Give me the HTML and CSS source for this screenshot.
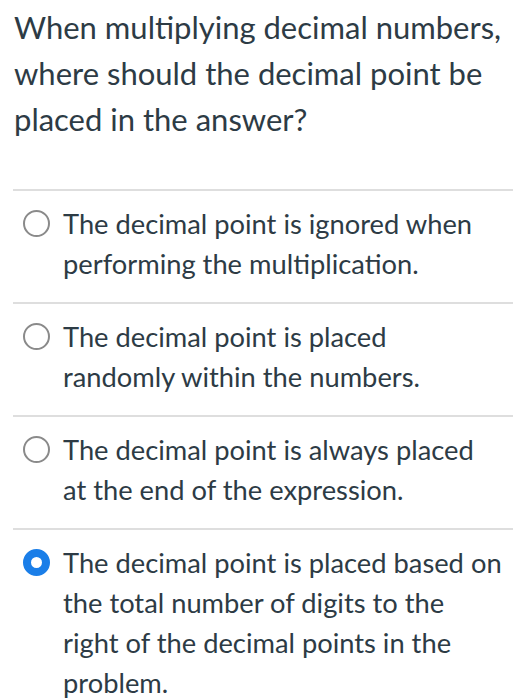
FILE: index.html
```html
<!DOCTYPE html>
<html>
<head>
<meta charset="utf-8">
<link rel="stylesheet" href="styles.css">
</head>
<body>
<div class="quiz">
  <h1 class="question">When multiplying decimal numbers, where should the decimal point be placed in the answer?</h1>
  <ul class="options">
    <li class="option"><span class="radio"></span><span class="label">The decimal point is ignored when performing the multiplication.</span></li>
    <li class="option"><span class="radio"></span><span class="label">The decimal point is placed randomly within the numbers.</span></li>
    <li class="option"><span class="radio"></span><span class="label">The decimal point is always placed at the end of the expression.</span></li>
    <li class="option selected"><span class="radio"></span><span class="label">The decimal point is placed based on the total number of digits to the right of the decimal points in the problem.</span></li>
  </ul>
</div>
</body>
</html>
```
FILE: styles.css
```css
html, body {
  margin: 0;
  padding: 0;
  background: #ffffff;
}
body {
  font-family: Lato, "Open Sans", sans-serif;
  color: #2d3b45;
}
.quiz {
  padding: 4px 2px 0 13px;
}
.question {
  margin: 0 0 47px 1px;
  font-size: 31px;
  font-weight: 400;
  line-height: 46px;
  letter-spacing: 0;
}
.options {
  list-style: none;
  margin: 0;
  padding: 0;
  border-top: 2px solid #dedede;
}
.option {
  display: flex;
  align-items: flex-start;
  gap: 13px;
  padding: 13px 11px 18px 10px;
  border-bottom: 2px solid #dedede;
  font-size: 27.3px;
  line-height: 40px;
}
.option.selected {
  border-bottom: none;
}
.radio {
  flex: none;
  box-sizing: border-box;
  width: 27px;
  height: 27px;
  margin-top: 6px;
  border: 2px solid #8a8a8a;
  border-radius: 50%;
}
.selected .radio {
  border: 8.5px solid #1a7ee8;
}
.label {
  flex: 1;
}
```
